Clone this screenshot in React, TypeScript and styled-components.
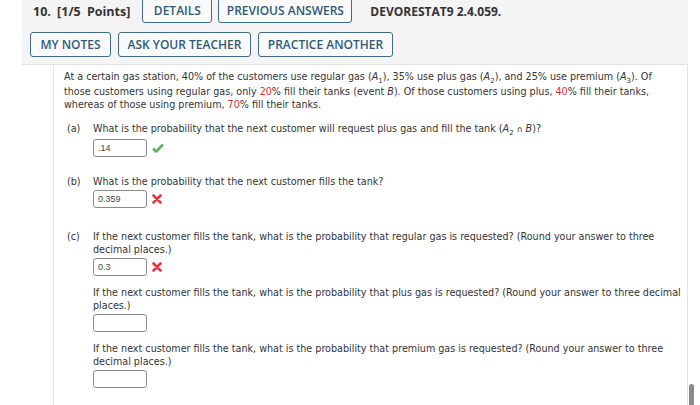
import React from "react";
import styled, { createGlobalStyle } from "styled-components";

const GlobalStyle = createGlobalStyle`
  html, body {
    margin: 0;
    padding: 0;
    background: #fff;
    overflow: hidden;
  }
`;

const Page = styled.div`
  width: 700px;
  height: 405px;
  position: relative;
  overflow: hidden;
`;

const Header = styled.div`
  margin: -2px 0 0 22px;
  width: 666px;
  height: 67px;
  box-sizing: border-box;
  padding: 0 0 0 8px;
  background: #f4f4f4;
  border-bottom: 1px solid #e2e2e2;
  display: flex;
  flex-direction: column;
  gap: 9px;
  font-family: "Open Sans", "Liberation Sans", sans-serif;
`;

const Row = styled.div<{ $gap: number }>`
  display: flex;
  align-items: center;
  gap: ${(p) => p.$gap}px;
`;

const Title = styled.span`
  font-size: 12.5px;
  font-weight: 700;
  color: #333;
  word-spacing: 3px;
  margin: 1px 6px 0 3px;
`;

const Ref = styled.span`
  font-size: 12px;
  font-weight: 700;
  color: #333;
  margin: 1px 0 0 12px;
`;

const Btn = styled.div<{ $w: number }>`
  width: ${(p) => p.$w}px;
  height: 25px;
  box-sizing: border-box;
  display: flex;
  align-items: center;
  justify-content: center;
  border: 1.5px solid #3f6b86;
  border-radius: 3px;
  background: #fafafa;
  color: #2e5b78;
  font-size: 12px;
  font-weight: 600;
  white-space: nowrap;
`;

const Content = styled.div`
  margin-left: 53px;
  width: 635px;
  height: 340px;
  box-sizing: border-box;
  border-left: 1px solid #e4e4e4;
  border-right: 1px solid #e4e4e4;
  padding: 5px 10px 0 10px;
  font-family: Verdana, "DejaVu Sans", sans-serif;
  font-size: 9.6px;
  line-height: 13px;
  color: #333;
`;

const Intro = styled.p`
  margin: 0 0 11px 0;
`;

const Red = styled.span`
  color: #c9342f;
`;

const Var = styled.i``;

const Sub = styled.span`
  font-size: 7px;
  position: relative;
  top: 3px;
`;

const Small = styled.span`
  font-size: 8px;
`;

const Part = styled.div<{ $top?: number }>`
  display: grid;
  grid-template-columns: 26px 1fr;
  margin: ${(p) => p.$top ?? 0}px -10px 0 3px;
`;

const Label = styled.span``;

const Body = styled.div`
  display: flex;
  flex-direction: column;
`;

const Question = styled.div<{ $gap?: number }>`
  margin-top: ${(p) => p.$gap ?? 0}px;
`;

const AnswerRow = styled.div`
  display: flex;
  align-items: center;
  gap: 5px;
  margin-top: 2px;
`;

const Box = styled.div`
  width: 54px;
  height: 18px;
  box-sizing: border-box;
  border: 1px solid #8a8a8a;
  border-radius: 3px;
  background: #fff;
  padding-left: 4px;
  display: flex;
  align-items: center;
  font-family: "Liberation Sans", Arial, sans-serif;
  font-size: 9px;
  color: #444;
`;

const Scroll = styled.div`
  position: absolute;
  left: 689px;
  top: 384px;
  width: 5px;
  height: 30px;
  border-radius: 3px;
  background: #8a8a8a;
`;

const Check = () => (
  <svg width="12" height="10" viewBox="0 0 12 10">
    <path d="M1 5.5 L4.3 8.5 L11 1.5" fill="none" stroke="#5bb55a" strokeWidth="2.6" strokeLinejoin="round" />
  </svg>
);

const Cross = () => (
  <svg width="10" height="10" viewBox="0 0 10 10">
    <path d="M1.5 1.5 L8.5 8.5 M8.5 1.5 L1.5 8.5" stroke="#e0393e" strokeWidth="2.6" strokeLinecap="round" />
  </svg>
);

const A = ({ n }: { n: number }) => (
  <>
    <Var>A</Var>
    <Sub>{n}</Sub>
  </>
);

const App = () => {
  return (
    <Page>
      <GlobalStyle />
      <Header>
        <Row $gap={6}>
          <Title>10. [1/5 Points]</Title>
          <Btn $w={70}>DETAILS</Btn>
          <Btn $w={134}>PREVIOUS ANSWERS</Btn>
          <Ref>DEVORESTAT9 2.4.059.</Ref>
        </Row>
        <Row $gap={7}>
          <Btn $w={81}>MY NOTES</Btn>
          <Btn $w={133}>ASK YOUR TEACHER</Btn>
          <Btn $w={135}>PRACTICE ANOTHER</Btn>
        </Row>
      </Header>
      <Content>
        <Intro>
          At a certain gas station, 40% of the customers use regular gas (<A n={1} />), 35% use plus gas (
          <A n={2} />), and 25% use premium (<A n={3} />). Of those customers using regular gas, only{" "}
          <Red>20</Red>% fill their tanks (event <Var>B</Var>). Of those customers using plus, <Red>40</Red>% fill
          their tanks, whereas of those using premium, <Red>70</Red>% fill their tanks.
        </Intro>
        <Part>
          <Label>(a)</Label>
          <Body>
            <Question>
              What is the probability that the next customer will request plus gas and fill the tank (<A n={2} />{" "}
              <Small>∩</Small> <Var>B</Var>)?
            </Question>
            <AnswerRow>
              <Box>.14</Box>
              <Check />
            </AnswerRow>
          </Body>
        </Part>
        <Part $top={18}>
          <Label>(b)</Label>
          <Body>
            <Question>What is the probability that the next customer fills the tank?</Question>
            <AnswerRow>
              <Box>0.359</Box>
              <Cross />
            </AnswerRow>
          </Body>
        </Part>
        <Part $top={22}>
          <Label>(c)</Label>
          <Body>
            <Question>
              If the next customer fills the tank, what is the probability that regular gas is requested? (Round your
              answer to three decimal places.)
            </Question>
            <AnswerRow>
              <Box>0.3</Box>
              <Cross />
            </AnswerRow>
            <Question $gap={10}>
              If the next customer fills the tank, what is the probability that plus gas is requested? (Round your
              answer to three decimal places.)
            </Question>
            <AnswerRow>
              <Box />
            </AnswerRow>
            <Question $gap={10}>
              If the next customer fills the tank, what is the probability that premium gas is requested? (Round your
              answer to three decimal places.)
            </Question>
            <AnswerRow>
              <Box />
            </AnswerRow>
          </Body>
        </Part>
      </Content>
      <Scroll />
    </Page>
  );
};

export default App;
